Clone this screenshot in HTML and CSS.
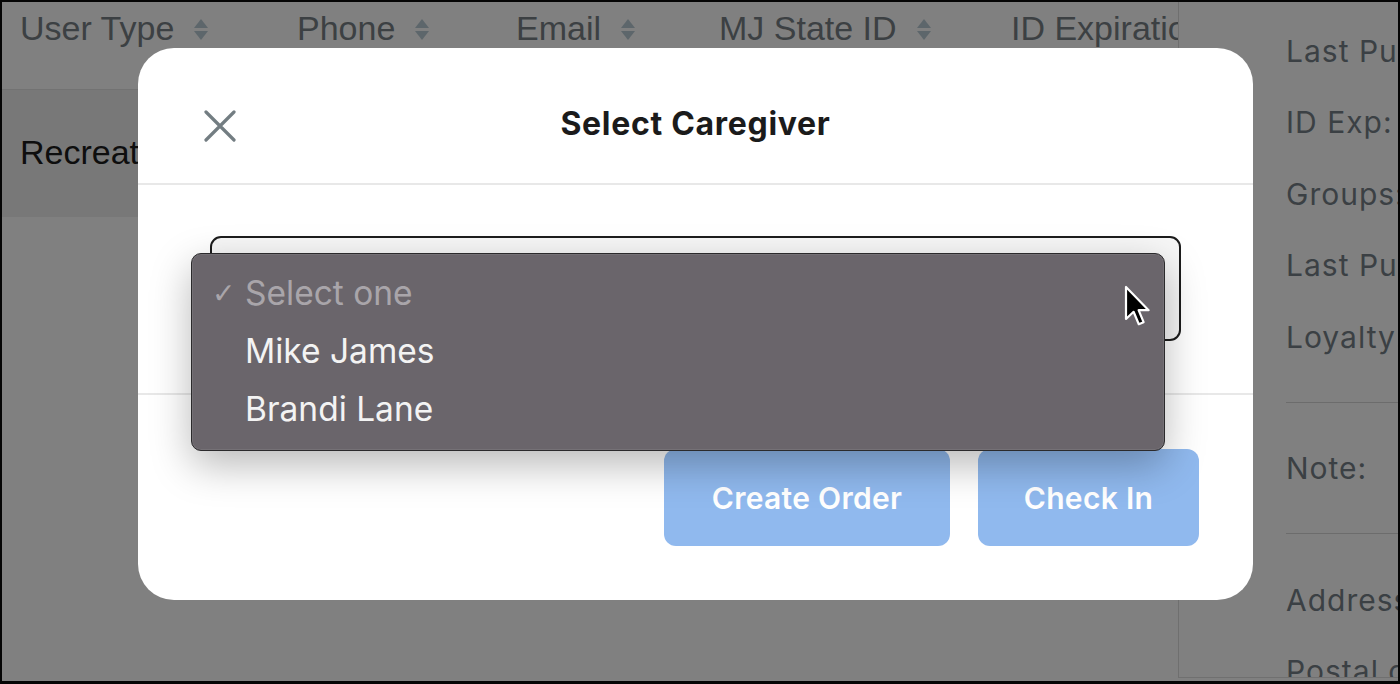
FILE: index.html
```html
<!DOCTYPE html>
<html lang="en">
<head>
<meta charset="utf-8">
<title>Select Caregiver</title>
<link rel="stylesheet" href="styles.css">
</head>
<body>
<div class="frame">
  <div class="app">
    <section class="table">
      <div class="thead">
        <div class="th c1">User Type <span class="sort"><i class="up"></i><i class="down"></i></span></div>
        <div class="th c2">Phone <span class="sort"><i class="up"></i><i class="down"></i></span></div>
        <div class="th c3">Email <span class="sort"><i class="up"></i><i class="down"></i></span></div>
        <div class="th c4">MJ State ID <span class="sort"><i class="up"></i><i class="down"></i></span></div>
        <div class="th c5">ID Expiration</div>
      </div>
      <div class="trow">
        <div class="td">Recreational</div>
      </div>
    </section>
    <aside class="panel">
      <div class="pitem">Last Purchase:</div>
      <div class="pitem">ID Exp:</div>
      <div class="pitem">Groups:</div>
      <div class="pitem">Last Purchase:</div>
      <div class="pitem">Loyalty:</div>
      <div class="psep"></div>
      <div class="pitem">Note:</div>
      <div class="psep"></div>
      <div class="pitem">Address:</div>
      <div class="pitem">Postal code:</div>
    </aside>
  </div>

  <div class="modal">
    <div class="modal-head">
      <button class="close" aria-label="Close">
        <svg width="32" height="32" viewBox="0 0 32 32"><path d="M2 2 L30 30 M30 2 L2 30" stroke="#737d82" stroke-width="3.2" stroke-linecap="round" fill="none"/></svg>
      </button>
      <h2 class="title">Select Caregiver</h2>
    </div>
    <div class="modal-body">
      <div class="select"></div>
    </div>
    <div class="modal-foot">
      <button class="btn btn-wide">Create Order</button>
      <button class="btn btn-narrow">Check In</button>
    </div>
  </div>

  <ul class="menu">
    <li class="opt muted"><span class="check">✓</span>Select one</li>
    <li class="opt">Mike James</li>
    <li class="opt">Brandi Lane</li>
  </ul>

  <svg class="cursor" width="30" height="42" viewBox="0 0 15 21">
    <path d="M1 1 L1 17 L4.8 13.4 L7.4 19.6 L9.8 18.6 L7.3 12.6 L12.3 12.6 Z" fill="#000" stroke="#fff" stroke-width="1.1" stroke-linejoin="round"/>
  </svg>
</div>
</body>
</html>
```

FILE: styles.css
```css
* { box-sizing: border-box; }
html, body { margin: 0; padding: 0; }
body { width: 1400px; height: 684px; overflow: hidden; background: #000; }

.frame {
  position: relative;
  width: 1400px;
  height: 684px;
  border: 2px solid #050505;
  border-bottom-width: 3px;
  background: #808080;
  overflow: hidden;
}

.app {
  display: flex;
  height: 100%;
}

.table {
  width: 1176px;
  flex: none;
  overflow: hidden;
}

.thead {
  display: flex;
  height: 88px;
  border-bottom: 1px solid #727272;
  padding-left: 18px;
  white-space: nowrap;
  font-family: "Liberation Sans", Arial, sans-serif;
  font-size: 34px;
  color: #3c4043;
}
.th {
  flex: none;
  display: flex;
  align-items: center;
  height: 52px;
  overflow: hidden;
}
.c1 { width: 277px; }
.c2 { width: 219px; }
.c3 { width: 203px; }
.c4 { width: 292px; }
.c5 { width: 170px; }

.sort {
  display: inline-flex;
  flex-direction: column;
  gap: 3px;
  margin-left: 20px;
  margin-top: 2px;
}
.sort i {
  display: block;
  width: 0; height: 0;
  border-left: 7.5px solid transparent;
  border-right: 7.5px solid transparent;
}
.sort .up { border-bottom: 9px solid #5d666b; }
.sort .down { border-top: 9px solid #5d666b; }

.trow {
  height: 127px;
  background: #787878;
  display: flex;
  align-items: center;
  padding-left: 18px;
  padding-bottom: 2px;
}
.td {
  font-family: "Liberation Sans", Arial, sans-serif;
  font-size: 34px;
  color: #0e0e0e;
}

.panel {
  flex: 1;
  border-left: 1px solid #6f6f6f;
  border-bottom: 1px solid #707070;
  height: 676px;
  padding-top: 13px;
  padding-left: 107px;
  font-family: Inter, "Noto Sans", sans-serif;
  font-size: 30px;
  letter-spacing: 1px;
  color: #3b4044;
  white-space: nowrap;
  overflow: hidden;
}
.pitem {
  height: 71.5px;
  display: flex;
  align-items: center;
}
.psep {
  height: 1px;
  background: #6c6c6c;
  margin: 29px 0 30px 0;
}

/* modal */
.modal {
  position: absolute;
  left: 136px;
  top: 46px;
  width: 1115px;
  height: 552px;
  background: #fff;
  border-radius: 36px;
  display: flex;
  flex-direction: column;
  font-family: Inter, "Noto Sans", sans-serif;
}
.modal-head {
  height: 137px;
  border-bottom: 2px solid #e8e8e8;
  display: flex;
  align-items: center;
  justify-content: center;
  position: relative;
}
.close {
  position: absolute;
  left: 66px;
  top: 62px;
  width: 32px;
  height: 32px;
  padding: 0;
  border: 0;
  background: none;
}
.close svg { display: block; }
.title {
  margin: 0;
  font-size: 32px;
  font-weight: 700;
  color: #1b1b1b;
  letter-spacing: 0.7px;
  padding-top: 15px;
}
.modal-body {
  height: 210px;
  border-bottom: 2px solid #e8e8e8;
  padding: 51px 72px 0 72px;
}
.select {
  height: 105px;
  border: 2px solid #1c1c1c;
  border-radius: 11px;
  background: #f7f7f7;
}
.modal-foot {
  flex: 1;
  display: flex;
  justify-content: flex-end;
  gap: 28px;
  padding: 54px 54px 0 0;
}
.btn {
  height: 97px;
  border: 0;
  border-radius: 12px;
  background: #90b9ee;
  color: #fff;
  font-family: Inter, "Noto Sans", sans-serif;
  font-weight: 600;
  font-size: 30px;
  letter-spacing: 0.3px;
  padding: 0;
}
.btn-wide { width: 286px; }
.btn-narrow { width: 221px; }

/* native dropdown menu */
.menu {
  position: absolute;
  left: 189px;
  top: 251px;
  width: 974px;
  height: 198px;
  margin: 0;
  padding: 10px 0 0 0;
  list-style: none;
  background: #6a656b;
  border: 1px solid #2b2a2c;
  border-radius: 10px;
  box-shadow: 0 14px 40px rgba(0, 0, 0, 0.28), 0 0 0 1px rgba(255,255,255,0.08) inset;
  font-family: Inter, "Noto Sans", sans-serif;
  font-size: 33.5px;
  color: #f3f3f3;
}
.opt {
  height: 58px;
  display: flex;
  align-items: center;
  padding-left: 53px;
  position: relative;
}
.opt.muted { color: #a9a5aa; }
.check {
  position: absolute;
  left: 20px;
  font-size: 28px;
  font-family: "DejaVu Sans", sans-serif;
}

.cursor {
  position: absolute;
  left: 1122px;
  top: 283px;
}
```
